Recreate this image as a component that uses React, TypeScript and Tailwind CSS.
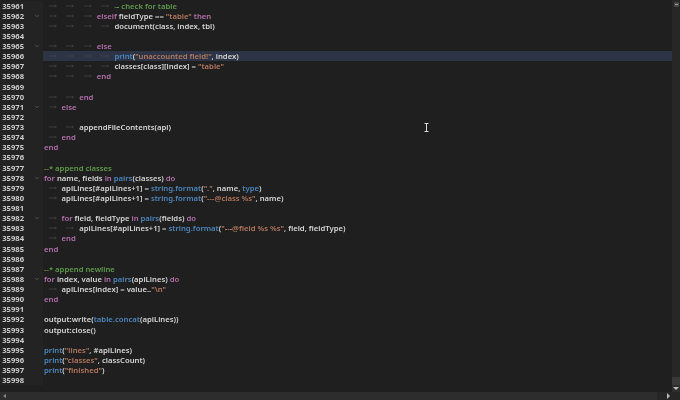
import React from "react";
import { ChevronDown } from "lucide-react";

type Tok = [string, string];

const K = "text-[#b56fae]";
const S = "text-[#b5795f]";
const C = "text-[#5f9a4c]";
const F = "text-[#4c86bd]";
const T = "text-[#d6d6d6]";

// indent, fold marker, tokens
type Line = { n: number; tabs?: number; fold?: boolean; toks?: Tok[] };

const lines: Line[] = [
  { n: 35961, tabs: 4, toks: [[C, "-- check for table"]] },
  { n: 35962, tabs: 3, fold: true, toks: [[K, "elseif"], [T, " fieldType == "], [S, "\"table\""], [K, " then"]] },
  { n: 35963, tabs: 4, toks: [[T, "document(class, index, tbl)"]] },
  { n: 35964 },
  { n: 35965, tabs: 3, fold: true, toks: [[K, "else"]] },
  { n: 35966, tabs: 4, toks: [[F, "print"], [T, "("], [S, "\"unaccounted field!\""], [T, ", index)"]] },
  { n: 35967, tabs: 4, toks: [[T, "classes[class][index] = "], [S, "\"table\""]] },
  { n: 35968, tabs: 3, toks: [[K, "end"]] },
  { n: 35969 },
  { n: 35970, tabs: 2, toks: [[K, "end"]] },
  { n: 35971, tabs: 1, fold: true, toks: [[K, "else"]] },
  { n: 35972 },
  { n: 35973, tabs: 2, toks: [[T, "appendFileContents(api)"]] },
  { n: 35974, tabs: 1, toks: [[K, "end"]] },
  { n: 35975, toks: [[K, "end"]] },
  { n: 35976 },
  { n: 35977, toks: [[C, "--* append classes"]] },
  { n: 35978, fold: true, toks: [[K, "for"], [T, " name, fields "], [K, "in"], [F, " pairs"], [T, "(classes) "], [K, "do"]] },
  { n: 35979, tabs: 1, toks: [[T, "apiLines[#apiLines+1] = "], [F, "string.format"], [T, "("], [S, "\".\""], [T, ", name, "], [F, "type"], [T, ")"]] },
  { n: 35980, tabs: 1, toks: [[T, "apiLines[#apiLines+1] = "], [F, "string.format"], [T, "("], [S, "\"---@class %s\""], [T, ", name)"]] },
  { n: 35981 },
  { n: 35982, tabs: 1, fold: true, toks: [[K, "for"], [T, " field, fieldType "], [K, "in"], [F, " pairs"], [T, "(fields) "], [K, "do"]] },
  { n: 35983, tabs: 2, toks: [[T, "apiLines[#apiLines+1] = "], [F, "string.format"], [T, "("], [S, "\"---@field %s %s\""], [T, ", field, fieldType)"]] },
  { n: 35984, tabs: 1, toks: [[K, "end"]] },
  { n: 35985, toks: [[K, "end"]] },
  { n: 35986 },
  { n: 35987, toks: [[C, "--* append newline"]] },
  { n: 35988, fold: true, toks: [[K, "for"], [T, " index, value "], [K, "in"], [F, " pairs"], [T, "(apiLines) "], [K, "do"]] },
  { n: 35989, tabs: 1, toks: [[T, "apiLines[index] = value.."], [S, "\"\\n\""]] },
  { n: 35990, toks: [[K, "end"]] },
  { n: 35991 },
  { n: 35992, toks: [[T, "output:write("], [F, "table.concat"], [T, "(apiLines))"]] },
  { n: 35993, toks: [[T, "output:close()"]] },
  { n: 35994 },
  { n: 35995, toks: [[F, "print"], [T, "("], [S, "\"lines\""], [T, ", #apiLines)"]] },
  { n: 35996, toks: [[F, "print"], [T, "("], [S, "\"classes\""], [T, ", classCount)"]] },
  { n: 35997, toks: [[F, "print"], [T, "("], [S, "\"finished\""], [T, ")"]] },
  { n: 35998 },
];

const TabArrow = () => (
  <span className="flex w-[17.6px] shrink-0 items-center pl-[4.5px]">
    <svg viewBox="0 0 8 4" className="h-[4px] w-[8px]">
      <path d="M0 2h7.2M6 1 7.4 2 6 3" stroke="#474747" strokeWidth="0.7" fill="none" />
    </svg>
  </span>
);

const CodeLine = ({ line }: { line: Line }) => {
  const active = line.n === 35966;
  return (
    <div className="flex h-[10.135px] items-center">
      <div className="flex h-full w-[43px] shrink-0 items-center bg-[#232323]">
        <span className="w-[24px] text-right text-[7.6px] font-bold text-[#cccccc]">{line.n}</span>
        {line.fold && <ChevronDown className="ml-[10px] h-[6px] w-[6px] text-[#707070]" strokeWidth={2.5} />}
      </div>
      <div className={`flex h-full flex-1 items-center whitespace-pre pl-[1px] ${active ? "bg-[#2c3445]" : ""}`}>
        {Array.from({ length: line.tabs ?? 0 }).map((_, i) => (
          <TabArrow key={i} />
        ))}
        <span>
          {line.toks?.map(([c, s], i) => (
            <span key={i} className={c}>{s}</span>
          ))}
        </span>
      </div>
    </div>
  );
};

export default function App() {
  return (
    <div className="relative flex h-[400px] w-[680px] flex-col overflow-hidden bg-[#1f1f1f] font-['Noto_Sans',sans-serif] text-[7.7px] font-semibold leading-[10px] blur-[0.4px]">
      <div className="flex min-h-0 flex-1">
        <div className="min-w-0 flex-1 pt-[0.5px]">
          {lines.map((l) => (
            <CodeLine key={l.n} line={l} />
          ))}
        </div>
        <div className="flex w-[8px] shrink-0 flex-col items-center justify-between bg-[#272727]">
          <div className="mt-[2px] flex h-[5px] w-[5px] items-center justify-center rounded-[1px] bg-[#484848]">
            <div className="h-[1px] w-[3px] bg-[#a0a0a0]" />
          </div>
          <div className="flex w-full flex-col items-center">
            <div className="h-[8px] w-full bg-[#3a3a3a]" />
            <div className="flex h-[7px] w-full items-center justify-center bg-[#2e2e2e]">
              <div className="h-0 w-0 border-x-[3px] border-t-[3px] border-x-transparent border-t-[#bbbbbb]" />
            </div>
          </div>
        </div>
      </div>
      <div className="flex h-[8px] shrink-0">
        <div className="flex flex-1 items-center bg-[#2d2d2d] pl-[3px]">
          <div className="h-0 w-0 border-y-[2px] border-r-[3px] border-y-transparent border-r-[#888888]" />
        </div>
        <div className="flex w-[23px] items-center bg-[#262626] pl-[10px]">
          <div className="h-0 w-0 border-y-[3px] border-l-[3px] border-y-transparent border-l-[#bbbbbb]" />
        </div>
      </div>
      {/* mouse cursor */}
      <div className="absolute left-[424px] top-[123px] h-[9px] w-[5px]">
        <svg viewBox="0 0 5 9" className="h-full w-full">
          <path d="M0.5 0.5h4M0.5 8.5h4M2.5 0.5v8" stroke="#d8d8d8" strokeWidth="1" fill="none" />
        </svg>
      </div>
    </div>
  );
}
